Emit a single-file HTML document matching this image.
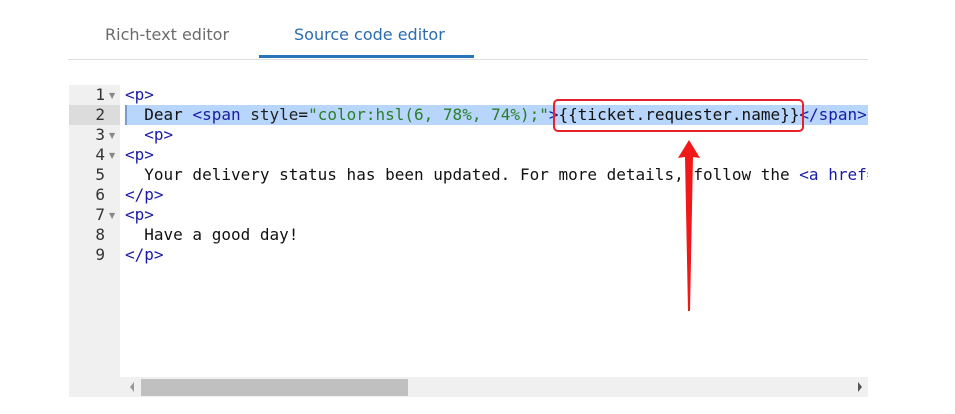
<!DOCTYPE html>
<html><head><style>
body{margin:0;width:955px;height:414px;background:#fff;position:relative;overflow:hidden;font-family:"DejaVu Sans","Liberation Sans",sans-serif}
.tab{position:absolute;top:25px;font-size:16px;}
.code{position:absolute;font-family:"DejaVu Sans Mono","Liberation Mono",monospace;font-size:16px;white-space:pre;line-height:20px}
.t{color:#1a1aa6}.s{color:#2a7d2a}.x{color:#111}.a{color:#222}
.ln{position:absolute;left:69px;width:36px;text-align:right;font-family:"DejaVu Sans Mono",monospace;font-size:16px;color:#333;line-height:20px}
.fold{position:absolute;left:109px;font-size:8px;color:#888}
</style></head><body>
<div class="tab" style="left:105px;color:#6b6b6b">Rich-text editor</div>
<div class="tab" style="left:294px;color:#2b6cb0">Source code editor</div>
<div style="position:absolute;left:259px;top:55px;width:215px;height:3px;background:#2872b8"></div>
<div style="position:absolute;left:68px;top:59px;width:800px;height:1px;background:#ddd"></div>
<div style="position:absolute;left:69px;top:85px;width:51px;height:312px;background:#f0f0f0"></div>
<div style="position:absolute;left:69px;top:105px;width:51px;height:20px;background:#dcdcdc"></div>
<div style="position:absolute;left:125px;top:105px;width:743px;height:20px;background:#b8d6fb"></div>
<div style="position:absolute;left:125px;top:105px;width:2px;height:20px;background:#7a9ccc"></div>
<div class="ln" style="top:85px">1<br>2<br>3<br>4<br>5<br>6<br>7<br>8<br>9</div>
<div class="fold" style="top:91px">▼</div><div class="fold" style="top:131px">▼</div><div class="fold" style="top:151px">▼</div><div class="fold" style="top:211px">▼</div>
<div style="position:absolute;left:125px;top:85px;width:743px;height:200px;overflow:hidden">
<div class="code x" style="left:0;top:0"><span class="t">&lt;p&gt;</span>
  Dear <span class="t">&lt;span</span> <span class="a">style</span>=<span class="s">"color:hsl(6, 78%, 74%);"</span><span class="t">&gt;</span>{{ticket.requester.name}}<span class="t">&lt;/span&gt;</span>
  <span class="t">&lt;p&gt;</span>
<span class="t">&lt;p&gt;</span>
  Your delivery status has been updated. For more details, follow the <span class="t">&lt;a href=</span>
<span class="t">&lt;/p&gt;</span>
<span class="t">&lt;p&gt;</span>
  Have a good day!
<span class="t">&lt;/p&gt;</span></div></div>
<div style="position:absolute;left:120px;top:377px;width:748px;height:20px;background:#f0f0f0"></div>
<div style="position:absolute;left:141px;top:379px;width:267px;height:17px;background:#c0c0c0"></div>
<div style="position:absolute;left:130px;top:382px;width:0;height:0;border-top:5px solid transparent;border-bottom:5px solid transparent;border-right:4px solid #999"></div>
<div style="position:absolute;left:858px;top:382px;width:0;height:0;border-top:5px solid transparent;border-bottom:5px solid transparent;border-left:4px solid #555"></div>
<div style="position:absolute;left:553px;top:99px;width:247px;height:29px;border:2px solid #e8202a;border-radius:5px"></div>
<svg style="position:absolute;left:0;top:0" width="955" height="414"><polygon points="689,140 700,158 693,157 690,311 688,311 685,157 678,158" fill="#f01818"/></svg>
</body></html>
